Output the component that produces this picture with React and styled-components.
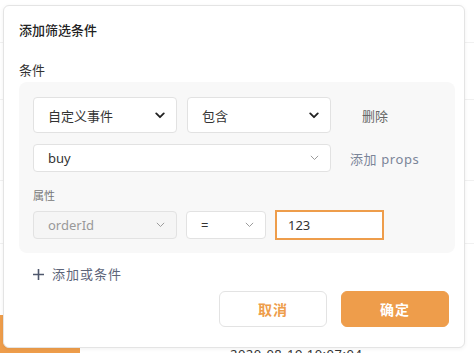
import React from "react";
import styled, { createGlobalStyle } from "styled-components";

const orange = "#ee9d4b";

const GlobalStyle = createGlobalStyle`
  html, body {
    margin: 0;
    padding: 0;
    background: #ffffff;
    font-family: "Noto Sans", "Noto Sans CJK SC", sans-serif;
  }
`;

const Page = styled.div`
  position: relative;
  width: 474px;
  height: 353px;
  overflow: hidden;
  background: #fff;
`;

const Backdrop = styled.div`
  display: flex;
  flex-direction: column;
  height: 100%;
`;

const BackLine = styled.div`
  height: ${(p) => p.$h}px;
  border-bottom: 1px solid #f1f1f1;
`;

const BackFooter = styled.div`
  margin-top: auto;
  display: flex;
  align-items: flex-end;
  gap: 150px;
  height: 38px;
`;

const BackButton = styled.div`
  width: 80px;
  height: 38px;
  background: ${orange};
  border-radius: 0 4px 0 0;
`;

const BackDate = styled.div`
  font-size: 13px;
  line-height: 16px;
  color: #333;
  margin-bottom: -9px;
  letter-spacing: 0.5px;
`;

const Modal = styled.div`
  position: absolute;
  left: 3px;
  top: 5px;
  width: 462px;
  height: 343px;
  background: #fff;
  border: 1px solid #e4e4e4;
  border-radius: 6px;
  box-shadow: 0 1px 4px rgba(0, 0, 0, 0.06);
  padding: 15px 9px 0 15px;
  box-sizing: border-box;
  display: flex;
  flex-direction: column;
`;

const Title = styled.div`
  font-size: 13px;
  font-weight: 500;
  color: #222;
  line-height: 18px;
`;

const SectionLabel = styled.div`
  font-size: 13px;
  color: #333;
  line-height: 18px;
  margin-top: 22px;
`;

const Panel = styled.div`
  margin-top: 3px;
  background: #f8f8f8;
  border-radius: 8px;
  padding: 15px 14px 13px 14px;
  display: flex;
  flex-direction: column;
`;

const Row = styled.div`
  display: flex;
  align-items: center;
  gap: ${(p) => p.$gap || 10}px;
  margin-top: ${(p) => p.$top || 0}px;
`;

const Select = styled.div`
  width: ${(p) => p.$w}px;
  height: ${(p) => p.$h || 28}px;
  box-sizing: border-box;
  border: 1px solid ${(p) => (p.$active ? orange : "#e2e2e2")};
  border-width: ${(p) => (p.$active ? 2 : 1)}px;
  border-radius: ${(p) => (p.$active ? 0 : 4)}px;
  background: ${(p) => (p.$disabled ? "#f5f5f5" : "#fff")};
  display: flex;
  align-items: center;
  justify-content: space-between;
  padding: 0 ${(p) => (p.$active ? 10 : 11)}px 0 ${(p) => (p.$active ? 11 : 14)}px;
  font-size: 13px;
  color: ${(p) => (p.$disabled ? "#999" : "#333")};
`;

const TextLink = styled.span`
  font-size: 13px;
  color: ${(p) => p.$color || "#666"};
  letter-spacing: ${(p) => p.$ls || 0}px;
  margin-left: ${(p) => p.$ml || 0}px;
  white-space: nowrap;
`;

const FieldLabel = styled.div`
  font-size: 11px;
  color: #777;
  margin-top: 17px;
  line-height: 14px;
`;

const AddOr = styled.div`
  display: flex;
  align-items: center;
  gap: 8px;
  margin: 12px 0 0 14px;
  font-size: 13px;
  color: #5d6579;
  letter-spacing: 1px;
  line-height: 18px;
`;

const Footer = styled.div`
  display: flex;
  justify-content: flex-end;
  gap: 14px;
  margin-top: 8px;
  padding-right: 6px;
`;

const Button = styled.button`
  width: 108px;
  height: 36px;
  border-radius: 6px;
  font-family: inherit;
  font-size: 14px;
  font-weight: 600;
  letter-spacing: 1px;
  border: 1px solid ${(p) => (p.$primary ? orange : "#e3e3e3")};
  background: ${(p) => (p.$primary ? orange : "#fff")};
  color: ${(p) => (p.$primary ? "#fff" : orange)};
`;

const Chevron = ({ bold }) => (
  <svg
    width={bold ? 10 : 9}
    height={bold ? 7 : 6}
    viewBox="0 0 12 8"
    fill="none"
    stroke={bold ? "#222" : "#999"}
    strokeWidth={bold ? 2.2 : 1.3}
    strokeLinecap="round"
    strokeLinejoin="round"
  >
    <path d="M1.5 1.5 L6 6 L10.5 1.5" />
  </svg>
);

const Plus = () => (
  <svg width="11" height="11" viewBox="0 0 11 11" stroke="#4f586d" strokeWidth="1.6">
    <path d="M5.5 0 V11 M0 5.5 H11" />
  </svg>
);

export default function App() {
  return (
    <Page>
      <GlobalStyle />
      <Backdrop>
        <BackLine $h={42} />
        <BackLine $h={56} />
        <BackLine $h={80} />
        <BackLine $h={62} />
        <BackFooter>
          <BackButton />
          <BackDate>2020-08-19 10:07:04</BackDate>
        </BackFooter>
      </Backdrop>
      <Modal>
        <Title>添加筛选条件</Title>
        <SectionLabel>条件</SectionLabel>
        <Panel>
          <Row>
            <Select $w={144} $h={36}>
              自定义事件
              <Chevron bold />
            </Select>
            <Select $w={144} $h={36}>
              包含
              <Chevron bold />
            </Select>
            <TextLink $ml={21}>删除</TextLink>
          </Row>
          <Row $top={11}>
            <Select $w={298}>
              buy
              <Chevron />
            </Select>
            <TextLink $color="#7b8598" $ls={0.6} $ml={9}>
              添加 props
            </TextLink>
          </Row>
          <FieldLabel>属性</FieldLabel>
          <Row $top={7} $gap={9}>
            <Select $w={144} $disabled>
              orderId
              <Chevron />
            </Select>
            <Select $w={80}>
              =
              <Chevron />
            </Select>
            <Select $w={109} $h={30} $active>
              123
            </Select>
          </Row>
        </Panel>
        <AddOr>
          <Plus />
          添加或条件
        </AddOr>
        <Footer>
          <Button>取消</Button>
          <Button $primary>确定</Button>
        </Footer>
      </Modal>
    </Page>
  );
}
